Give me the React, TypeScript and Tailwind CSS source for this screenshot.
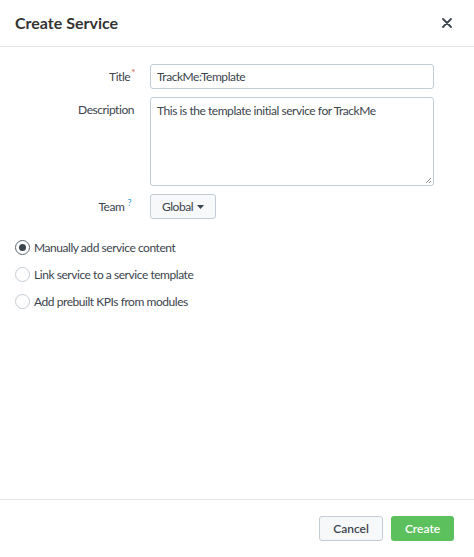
const font = { fontFamily: 'Lato, "Open Sans", sans-serif' }

function Radio({ label, checked }: { label: string; checked?: boolean }) {
  return (
    <label className="flex h-[27px] items-center gap-[4px]">
      <span
        className={
          'flex h-[15px] w-[15px] items-center justify-center rounded-full border bg-white ' +
          (checked ? 'border-[#5c6773]' : 'border-[#c3cbd4]')
        }
      >
        {checked && <span className="h-[7px] w-[7px] rounded-full bg-[#3c444d]" />}
      </span>
      <span className="text-[12px] tracking-[-0.45px] text-[#3c444d]">{label}</span>
    </label>
  )
}

export default function App() {
  return (
    <div className="flex h-[557px] w-[474px] flex-col bg-white text-[#3c444d]" style={font}>
      {/* header */}
      <div className="flex h-[47px] shrink-0 items-center justify-between border-b border-[#e1e6eb] pl-[15px] pr-[22px]">
        <h1 className="text-[16px] font-bold text-[#333]">Create Service</h1>
        <svg width="10" height="10" viewBox="0 0 10 10">
          <path d="M1 1 L9 9 M9 1 L1 9" stroke="#3c444d" strokeWidth="1.8" strokeLinecap="round" />
        </svg>
      </div>

      {/* body */}
      <div className="flex-1 pt-[17px] text-[12px] tracking-[-0.45px]">
        <div className="flex items-center">
          <div className="w-[135px] text-right">
            Title<sup className="ml-[1px] text-[10px] text-[#d6563c]">*</sup>
          </div>
          <div className="ml-[15px] flex h-[25px] w-[284px] items-center rounded-[3px] border border-[#c3cbd4] px-[6px]">
            TrackMe:Template
          </div>
        </div>

        <div className="mt-[8px] flex">
          <div className="w-[134px] pt-[4px] text-right">Description</div>
          <div className="relative ml-[16px] h-[89px] w-[284px] rounded-[3px] border border-[#c3cbd4] px-[6px] pt-[4px]">
            This is the template initial service for TrackMe
            <svg className="absolute bottom-[1px] right-[1px]" width="8" height="8" viewBox="0 0 8 8">
              <path d="M7 2 L2 7 M7 5 L5 7" stroke="#888" strokeWidth="1" />
            </svg>
          </div>
        </div>

        <div className="mt-[8px] flex items-center">
          <div className="w-[135px] pr-[4px] text-right">
            Team<sup className="ml-[3px] text-[9px] text-[#1a9ad6]">?</sup>
          </div>
          <button className="ml-[15px] flex h-[25px] w-[66px] items-center justify-center gap-[4px] rounded-[3px] border border-[#c3cbd4] bg-[#f7f8fa] text-[#3c444d]">
            Global
            <svg width="7" height="4" viewBox="0 0 7 4">
              <path d="M0 0 L7 0 L3.5 4 Z" fill="#3c444d" />
            </svg>
          </button>
        </div>

        <div className="mt-[15px] flex flex-col pl-[15px]">
          <Radio label="Manually add service content" checked />
          <Radio label="Link service to a service template" />
          <Radio label="Add prebuilt KPIs from modules" />
        </div>
      </div>

      {/* footer */}
      <div className="flex h-[58px] shrink-0 items-center justify-end gap-[8px] border-t border-[#e1e6eb] pr-[20px] text-[12px]">
        <button className="h-[25px] w-[64px] rounded-[3px] border border-[#c3cbd4] bg-[#f7f8fa] font-semibold text-[#3c444d]">
          Cancel
        </button>
        <button className="h-[25px] w-[63px] rounded-[3px] bg-[#5cc05c] font-semibold text-white">
          Create
        </button>
      </div>
    </div>
  )
}
